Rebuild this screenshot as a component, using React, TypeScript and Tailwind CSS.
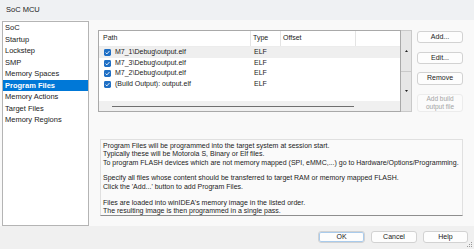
import React from 'react';

const TREE = [
  'SoC',
  'Startup',
  'Lockstep',
  'SMP',
  'Memory Spaces',
  'Program Files',
  'Memory Actions',
  'Target Files',
  'Memory Regions',
];

const FILES = [
  'M7_1\\Debug\\output.elf',
  'M7_3\\Debug\\output.elf',
  'M7_2\\Debug\\output.elf',
  '(Build Output): output.elf',
];

const Check = () => (
  <svg width="7" height="7" viewBox="0 0 7 7" className="shrink-0">
    <rect x="0" y="0" width="7" height="7" rx="1.4" fill="#1f6fc5" />
    <path d="M1.6 3.6 L2.9 4.9 L5.4 2.1" stroke="#fff" strokeWidth="0.9" fill="none" />
  </svg>
);

const Btn = ({ label, className = '' }: { label: string; className?: string }) => (
  <div
    className={`flex items-center justify-center bg-[#fdfdfd] border border-[#d2d2d2] rounded-[3px] text-[7px] text-[#1b1b1b] ${className}`}
  >
    {label}
  </div>
);

const App: React.FC = () => {
  return (
    <div className="w-[474px] h-[249px] flex flex-col bg-[#f9f9f9] text-[#1b1b1b] overflow-hidden relative font-['Liberation_Sans',Arial,sans-serif]">
      {/* title */}
      <div className="h-[20px] shrink-0 flex items-center pl-[6px] text-[7.5px] bg-[#eff1f3]">SoC MCU</div>

      <div className="flex flex-1 min-h-0">
        {/* tree */}
        <div className="ml-[2px] mt-[1px] w-[87px] bg-white border border-[#b4b4b4] flex flex-col">
          {TREE.map((t) => (
            <div
              key={t}
              className={`h-[11.5px] shrink-0 flex items-center pl-[2px] text-[7.5px] ${
                t === 'Program Files' ? 'bg-[#0078d7] text-white font-bold' : ''
              }`}
            >
              {t}
            </div>
          ))}
        </div>

        {/* right */}
        <div className="flex-1 flex flex-col pl-[9px] pt-[10px]">
          <div className="flex h-[82px]">
            {/* list */}
            <div className="w-[303px] bg-white border border-[#a9a9a9] flex flex-col text-[7px]">
              <div className="h-[16px] shrink-0 flex border-b border-[#ececec]">
                <div className="w-[152px] border-r border-[#e4e4e4] flex items-center pl-[4px]">Path</div>
                <div className="w-[30px] border-r border-[#e4e4e4] flex items-center pl-[2px]">Type</div>
                <div className="w-[75px] border-r border-[#e4e4e4] flex items-center pl-[2px]">Offset</div>
              </div>
              {FILES.map((f, i) => (
                <div key={f} className={`h-[10.7px] shrink-0 flex items-center ${i === 0 ? 'bg-[#efefef]' : ''}`}>
                  <div className="w-[152px] flex items-center gap-[4px] pl-[5px]">
                    <Check />
                    <span>{f}</span>
                  </div>
                  <div className="w-[30px] pl-[3px]">ELF</div>
                </div>
              ))}
              <div className="flex-1" />
              <div className="h-[10px] shrink-0 bg-[#f0f0f0] flex items-center">
                <div className="ml-[13px] w-[242px] h-[1px] bg-[#6f6f6f]" />
              </div>
            </div>

            {/* up / down */}
            <div className="w-[11px] bg-[#e6e6e6] border-y border-r border-[#c9c9c9] flex flex-col">
              <div className="flex-1 flex items-center justify-center border-b border-[#c9c9c9]">
                <svg width="3" height="2" viewBox="0 0 3 2">
                  <path d="M0 2 L1.5 0 L3 2 Z" fill="#222" />
                </svg>
              </div>
              <div className="flex-1 flex items-center justify-center">
                <svg width="3" height="2" viewBox="0 0 3 2">
                  <path d="M0 0 L1.5 2 L3 0 Z" fill="#222" />
                </svg>
              </div>
            </div>

            {/* buttons */}
            <div className="ml-[5px] w-[46px] flex flex-col">
              <Btn label="Add..." className="mt-[1px] h-[12px]" />
              <Btn label="Edit..." className="mt-[9px] h-[12px]" />
              <Btn label="Remove" className="mt-[8px] h-[13px]" />
              <div className="mt-[9px] h-[18px] flex flex-col items-center justify-center bg-[#fbfbfb] border border-[#ececec] rounded-[3px] text-[6.5px] leading-[8px] text-[#a3a3a3] text-center">
                <span>Add build</span>
                <span>output file</span>
              </div>
            </div>
          </div>

          {/* description */}
          <div className="mt-[27px] ml-[2px] w-[363px] h-[77px] bg-[#fafafa] border border-[#e0e0e0] border-b-[#8e8e8e] pl-[2px] pt-[1.5px] text-[7px] leading-[8.7px]">
            <div>Program Files will be programmed into the target system at session start.</div>
            <div>Typically these will be Motorola S, Binary or Elf files.</div>
            <div>To program FLASH devices which are not memory mapped (SPI, eMMC,...) go to Hardware/Options/Programming.</div>
            <div className="mt-[6.5px]">Specify all files whose content should be transferred to target RAM or memory mapped FLASH.</div>
            <div>Click the 'Add...' button to add Program Files.</div>
            <div className="mt-[7px]">Files are loaded into winIDEA's memory image in the listed order.</div>
            <div>The resulting image is then programmed in a single pass.</div>
          </div>
        </div>
      </div>

      {/* bottom */}
      <div className="h-[23px] shrink-0 bg-[#f0f0f0] flex justify-end items-start pt-[5px] pr-[6px] gap-[6px]">
        <Btn label="OK" className="w-[47px] h-[12px] border-[#2c78c8] shadow-[inset_0_0_0_1px_#a9cbec]" />
        <Btn label="Cancel" className="w-[46px] h-[12px]" />
        <Btn label="Help" className="w-[45px] h-[12px]" />
      </div>

      <svg width="6" height="6" viewBox="0 0 6 6" className="absolute right-[1px] bottom-[1px]">
        <rect x="4" y="0" width="1" height="1" fill="#999" />
        <rect x="2" y="2" width="1" height="1" fill="#999" />
        <rect x="4" y="2" width="1" height="1" fill="#999" />
        <rect x="0" y="4" width="1" height="1" fill="#999" />
        <rect x="2" y="4" width="1" height="1" fill="#999" />
        <rect x="4" y="4" width="1" height="1" fill="#999" />
      </svg>
    </div>
  );
};

export default App;
